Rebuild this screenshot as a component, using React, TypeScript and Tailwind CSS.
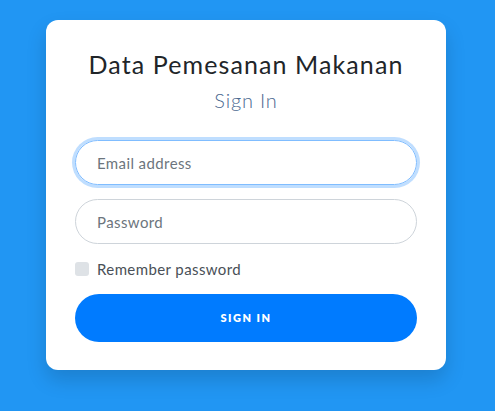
import { useState } from 'react';

const FONT = "font-['Lato','Open_Sans',sans-serif]";

export default function App() {
  const [remember, setRemember] = useState(false);

  return (
    <div className={`min-h-[411px] bg-[#2196f3] pt-[20px] ${FONT}`}>
      <div className="ml-[46px] w-[400px] rounded-[12px] bg-white px-[29px] pt-[30px] pb-[28px] shadow-[0_10px_20px_rgba(0,0,0,0.15)]">
        {/* Heading */}
        <h1 className="text-center text-[25px] leading-[29px] tracking-[1.1px] text-[#212529]">Data Pemesanan Makanan</h1>
        <h2 className="mt-[9px] text-center text-[20px] leading-[24px] font-light tracking-[0.8px] text-[#4a6890]">Sign In</h2>

        {/* Form */}
        <form className="mt-[28px]" onSubmit={(e) => e.preventDefault()}>
          <input
            type="email"
            placeholder="Email address"
            className="block h-[45px] w-full rounded-full border border-[#80bdff] px-[21px] text-[15px] tracking-[0.4px] text-[#495057] placeholder:text-[#6c757d] shadow-[0_0_0_3px_rgba(0,123,255,0.25)] outline-none"
          />
          <input
            type="password"
            placeholder="Password"
            className="mt-[14px] block h-[45px] w-full rounded-full border border-[#ced4da] px-[21px] text-[15px] tracking-[0.4px] text-[#495057] placeholder:text-[#6c757d] outline-none"
          />

          <label className="mt-[18px] flex items-center gap-[8px] text-[15px] leading-[14px] tracking-[0.4px] text-[#495057]">
            <span
              onClick={() => setRemember(!remember)}
              className={`h-[14px] w-[14px] rounded-[3px] ${remember ? 'bg-[#007bff]' : 'bg-[#dee2e6]'}`}
            />
            Remember password
          </label>

          <button
            type="submit"
            className="mt-[18px] block h-[48px] w-full rounded-full bg-[#007bff] text-[11px] font-extrabold tracking-[1.5px] text-white"
          >
            SIGN IN
          </button>
        </form>
      </div>
    </div>
  );
}
